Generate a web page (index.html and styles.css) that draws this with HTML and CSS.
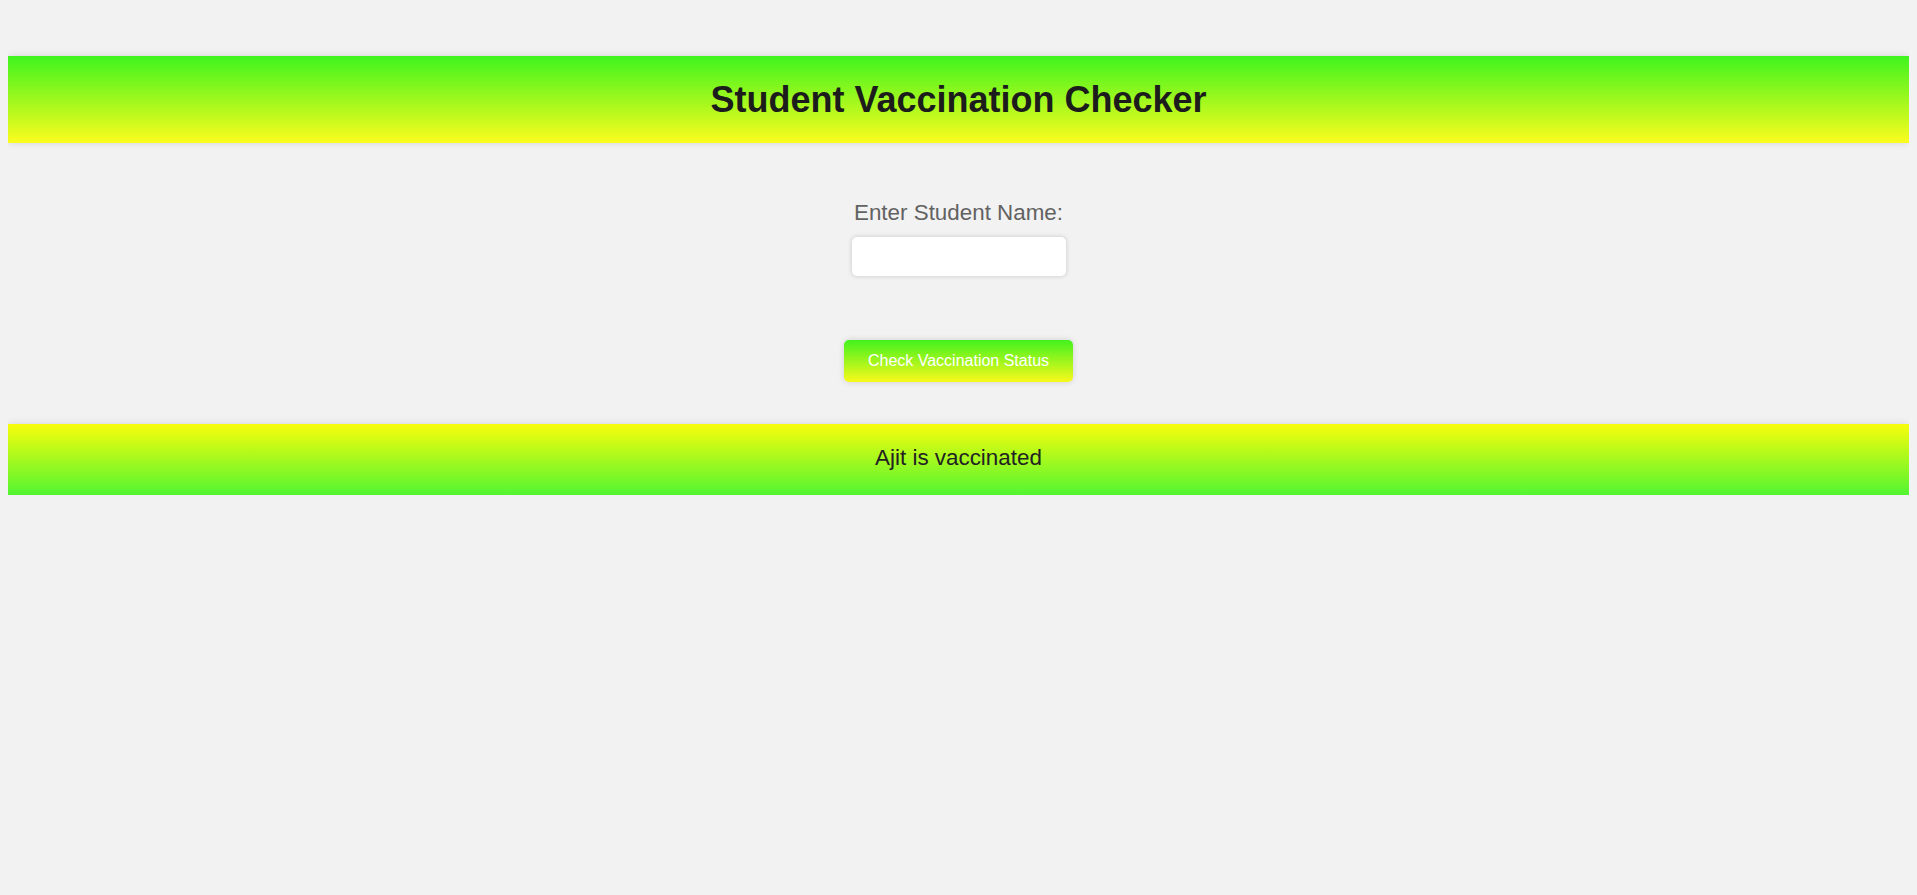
FILE: index.html
```html
<!DOCTYPE html>
<html lang="en">
<head>
<meta charset="utf-8">
<title>Student Vaccination Checker</title>
<link rel="stylesheet" href="styles.css">
</head>
<body>
  <header class="banner">
    <h1 class="title">Student Vaccination Checker</h1>
  </header>
  <main class="form">
    <label class="label" for="name">Enter Student Name:</label>
    <input class="field" id="name" type="text">
    <button class="check" type="button">Check Vaccination Status</button>
  </main>
  <div class="result">Ajit is vaccinated</div>
</body>
</html>
```

FILE: styles.css
```css
html, body {
  background: #f2f2f2;
}
body {
  margin: 8px;
  font-family: "Liberation Sans", Arial, sans-serif;
}
.banner {
  margin-top: 48px;
  height: 87px;
  display: flex;
  align-items: center;
  justify-content: center;
  background: linear-gradient(to bottom, #3ff41e, #fcfc1e);
  box-shadow: 0 0 8px rgba(0, 0, 0, 0.12);
}
.title {
  margin: 0;
  font-size: 36px;
  font-weight: bold;
  color: #1c1c1c;
}
.form {
  display: flex;
  flex-direction: column;
  align-items: center;
  padding-top: 57px;
}
.label {
  font-size: 22.4px;
  color: #626262;
  line-height: 25px;
}
.field {
  margin-top: 12px;
  width: 214px;
  height: 39px;
  box-sizing: border-box;
  border: none;
  border-radius: 5px;
  background: #fff;
  box-shadow: 0 0 5px rgba(0, 0, 0, 0.18);
  font-family: "Liberation Sans", Arial, sans-serif;
  font-size: 16px;
  padding: 0 10px;
}
.check {
  margin-top: 64px;
  width: 229px;
  height: 42px;
  border: none;
  border-radius: 5px;
  background: linear-gradient(to bottom, #42f21f, #f9f91a);
  color: #fff;
  font-family: "Liberation Sans", Arial, sans-serif;
  font-size: 16px;
  padding: 0;
  box-shadow: 0 0 6px rgba(0, 0, 0, 0.15);
  cursor: pointer;
}
.result {
  margin-top: 42px;
  height: 71px;
  box-sizing: border-box;
  padding-bottom: 3px;
  display: flex;
  align-items: center;
  justify-content: center;
  background: linear-gradient(to bottom, #f8fd0c, #52f531);
  box-shadow: 0 0 8px rgba(0, 0, 0, 0.12);
  font-size: 22.4px;
  color: #222;
}
```
